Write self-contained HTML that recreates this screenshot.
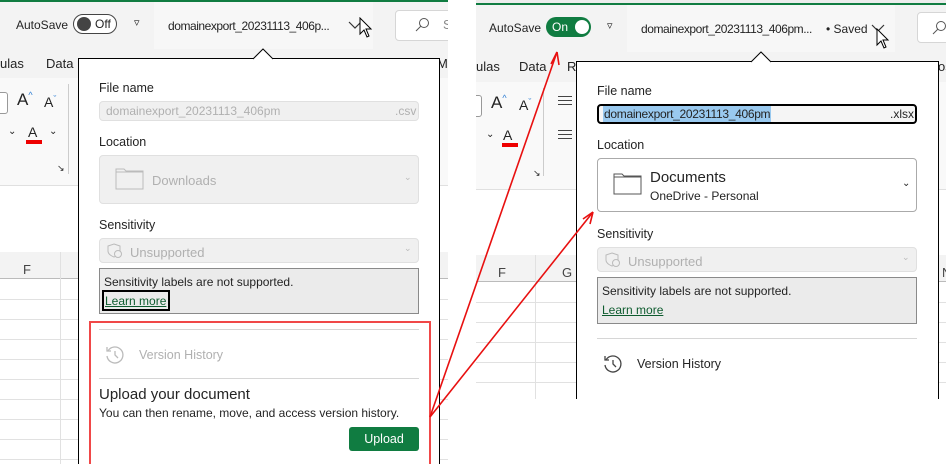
<!DOCTYPE html>
<html><head><meta charset="utf-8"><style>
*{margin:0;padding:0;box-sizing:border-box}
body{width:946px;height:464px;overflow:hidden;background:#fff;font-family:"Liberation Sans",sans-serif;font-size:12px;color:#242424;position:relative}
.a{position:absolute;white-space:nowrap}
.img{position:absolute;overflow:hidden}
.lbl{font-size:12.5px;color:#242424}
.dd{position:absolute;background:#f0f0f0;border:1px solid #e0e0e0;border-radius:4px}
.gl{position:absolute;background:#e1e1e1}
.tt{font-size:12px;letter-spacing:-0.45px}
</style></head><body>

<!-- LEFT IMAGE -->
<div class="img" style="left:0;top:0;width:448px;height:464px;background:#fff">
  <div class="a" style="left:0;top:0;width:448px;height:2px;background:#107c41"></div>
  <div class="a" style="left:0;top:2px;width:448px;height:76px;background:#f3f3f3"></div>
  <div class="a" style="left:154px;top:2px;width:219px;height:47px;background:#f7f7f7"></div>
  <div class="a" style="left:16px;top:18px;font-size:12px">AutoSave</div>
  <div class="a" style="left:73px;top:14px;width:44px;height:20px;border:1px solid #444;border-radius:10px;background:#fff"></div>
  <div class="a" style="left:77px;top:17px;width:14px;height:14px;border-radius:7px;background:#444"></div>
  <div class="a" style="left:95px;top:17px;font-size:12px">Off</div>
  <div class="a" style="left:134px;top:16px;font-size:11px">▿</div>
  <div class="a tt" style="left:168px;top:19px">domainexport_20231113_406p...</div>
  <svg class="a" style="left:348px;top:20px" width="14" height="10"><path d="M1 2 L7 8 L13 2" stroke="#333" fill="none" stroke-width="1.2"/></svg>
  <svg class="a" style="left:359px;top:17px" width="14" height="22"><path d="M1 1 L1 17 L5 13 L8 20 L10 19 L7 12 L12 12 Z" fill="#fff" stroke="#000"/></svg>
  <div class="a" style="left:395px;top:10px;width:60px;height:31px;background:#fff;border:1px solid #d6d6d6;border-radius:4px"></div>
  <svg class="a" style="left:414px;top:17px" width="16" height="16"><circle cx="10" cy="6" r="4.5" stroke="#555" fill="none"/><path d="M7 9 L2 14" stroke="#555"/></svg>
  <div class="a" style="left:443px;top:17px;font-size:13px;color:#888">S</div>
  <div class="a" style="left:0;top:56px;font-size:13px">ulas</div>
  <div class="a" style="left:46px;top:56px;font-size:13px">Data</div>
  <div class="a" style="left:437px;top:56px;font-size:13px">Ma</div>
  <div class="a" style="left:0;top:78px;width:448px;height:108px;background:#f9f9f9;border-bottom:1px solid #e0e0e0"></div>
  <div class="a" style="left:-4px;top:92px;width:12px;height:22px;border:1px solid #999;border-radius:3px;background:#fff"></div>
  <div class="a" style="left:17px;top:90px;font-size:17px">A<span style="font-size:9px;color:#2b7cd3;vertical-align:top">^</span></div>
  <div class="a" style="left:44px;top:94px;font-size:14px">A<span style="font-size:9px;color:#2b7cd3;vertical-align:top">ˇ</span></div>
  <div class="a" style="left:8px;top:126px;font-size:10px">⌄</div>
  <div class="a" style="left:28px;top:124px;font-size:14px">A</div>
  <div class="a" style="left:26px;top:140px;width:16px;height:4px;background:#e00"></div>
  <div class="a" style="left:49px;top:126px;font-size:10px">⌄</div>
  <div class="a" style="left:68px;top:84px;width:1px;height:90px;background:#ccc"></div>
  <div class="a" style="left:57px;top:163px;font-size:9px">↘</div>
  <div class="a" style="left:0;top:252px;width:448px;height:27px;background:#f3f3f3;border-bottom:1px solid #bbb"></div>
  <div class="a" style="left:23px;top:262px;font-size:13px;color:#444">F</div>
  <div class="gl" style="left:60px;top:252px;width:1px;height:212px"></div>
  <div class="gl" style="left:0;top:299px;width:448px;height:1px"></div>
  <div class="gl" style="left:0;top:319px;width:448px;height:1px"></div>
  <div class="gl" style="left:0;top:339px;width:448px;height:1px"></div>
  <div class="gl" style="left:0;top:359px;width:448px;height:1px"></div>
  <div class="gl" style="left:0;top:379px;width:448px;height:1px"></div>
  <div class="gl" style="left:0;top:399px;width:448px;height:1px"></div>
  <div class="gl" style="left:0;top:419px;width:448px;height:1px"></div>
  <div class="gl" style="left:0;top:439px;width:448px;height:1px"></div>
  <div class="gl" style="left:0;top:459px;width:448px;height:1px"></div>
  <!-- flyout -->
  <div class="a" style="left:78px;top:58px;width:362px;height:420px;background:#fff;border:1px solid #000"></div>
  <svg class="a" style="left:253px;top:48px" width="22" height="12"><path d="M0 11 L10 1 L20 11" fill="#fff" stroke="#000"/></svg>
  <div class="a lbl" style="left:99px;top:81px">File name</div>
  <div class="dd" style="left:99px;top:101px;width:320px;height:20px"></div>
  <div class="a" style="left:106px;top:104px;color:#b0b0b0">domainexport_20231113_406pm</div>
  <div class="a" style="left:395px;top:104px;color:#b0b0b0">.csv</div>
  <div class="a lbl" style="left:99px;top:135px">Location</div>
  <div class="dd" style="left:99px;top:155px;width:320px;height:49px"></div>
  <svg class="a" style="left:115px;top:168px" width="29" height="22"><path d="M1 1 H9 L11 3 H28 V21 H1 Z M1 4 H28" fill="none" stroke="#bbb"/></svg>
  <div class="a" style="left:152px;top:173px;color:#b0b0b0;font-size:13px">Downloads</div>
  <div class="a" style="left:404px;top:172px;color:#bbb;font-size:9px">⌄</div>
  <div class="a lbl" style="left:99px;top:218px">Sensitivity</div>
  <div class="dd" style="left:99px;top:238px;width:320px;height:25px"></div>
  <svg class="a" style="left:106px;top:243px" width="18" height="16"><path d="M8 1 L14 3 V8 C14 12 8 14 8 14 C8 14 2 12 2 8 V3 Z" fill="none" stroke="#bbb"/><circle cx="12" cy="11" r="3.5" fill="#f0f0f0" stroke="#bbb"/></svg>
  <div class="a" style="left:130px;top:245px;color:#b0b0b0;font-size:13px">Unsupported</div>
  <div class="a" style="left:404px;top:243px;color:#bbb;font-size:9px">⌄</div>
  <div class="a" style="left:99px;top:268px;width:320px;height:46px;background:#ebebeb;border:1px solid #8a8a8a"></div>
  <div class="a" style="left:104px;top:275px">Sensitivity labels are not supported.</div>
  <div class="a" style="left:102px;top:290px;width:68px;height:21px;border:2px solid #000"></div>
  <div class="a" style="left:105px;top:294px;color:#0e5c2f;text-decoration:underline">Learn more</div>
  <div class="a" style="left:99px;top:329px;width:320px;height:1px;background:#d6d6d6"></div>
  <svg class="a" style="left:105px;top:345px" width="20" height="20"><path d="M3 6 A8 8 0 1 1 2 11" fill="none" stroke="#bbb" stroke-width="1.3"/><path d="M2 2 V6 H6" fill="none" stroke="#bbb" stroke-width="1.3"/><path d="M10 6 V10 L13 13" fill="none" stroke="#bbb" stroke-width="1.3"/></svg>
  <div class="a" style="left:139px;top:348px;color:#b0b0b0;font-size:12.5px">Version History</div>
  <div class="a" style="left:99px;top:378px;width:320px;height:1px;background:#d6d6d6"></div>
  <div class="a" style="left:99px;top:386px;font-size:15px">Upload your document</div>
  <div class="a" style="left:99px;top:406px">You can then rename, move, and access version history.</div>
  <div class="a" style="left:349px;top:427px;width:70px;height:24px;background:#107c41;border-radius:3px;color:#fff;text-align:center;line-height:24px;font-size:12.5px">Upload</div>
  <div class="a" style="left:89px;top:321px;width:342px;height:145px;border:2px solid #f04848"></div>
</div>

<!-- RIGHT IMAGE -->
<div class="img" style="left:476px;top:0;width:470px;height:400px;background:#fff">
  <div class="a" style="left:0;top:0;width:470px;height:4px;background:#ececec"></div>
  <div class="a" style="left:0;top:3px;width:470px;height:2px;background:#107c41"></div>
  <div class="a" style="left:0;top:5px;width:470px;height:77px;background:#f3f3f3"></div>
  <div class="a" style="left:151px;top:5px;width:268px;height:47px;background:#f7f7f7"></div>
  <div class="a" style="left:13px;top:21px;font-size:12px">AutoSave</div>
  <div class="a" style="left:70px;top:17px;width:45px;height:20px;border-radius:10px;background:#107c41"></div>
  <div class="a" style="left:76px;top:20px;font-size:12px;color:#fff">On</div>
  <div class="a" style="left:99px;top:20px;width:14px;height:14px;border-radius:7px;background:#fff"></div>
  <div class="a" style="left:131px;top:19px;font-size:11px">▿</div>
  <div class="a tt" style="left:165px;top:22px">domainexport_20231113_406pm...</div>
  <div class="a" style="left:350px;top:22px;font-size:12px">• Saved</div>
  <svg class="a" style="left:395px;top:23px" width="14" height="10"><path d="M1 2 L7 8 L13 2" stroke="#333" fill="none" stroke-width="1.2"/></svg>
  <svg class="a" style="left:400px;top:28px" width="14" height="22"><path d="M1 1 L1 17 L5 13 L8 20 L10 19 L7 12 L12 12 Z" fill="#fff" stroke="#000"/></svg>
  <div class="a" style="left:441px;top:12px;width:40px;height:31px;background:#fff;border:1px solid #d6d6d6;border-radius:4px"></div>
  <svg class="a" style="left:455px;top:20px" width="16" height="16"><circle cx="10" cy="6" r="4.5" stroke="#555" fill="none"/><path d="M7 9 L2 14" stroke="#555"/></svg>
  <div class="a" style="left:0;top:59px;font-size:13px">ulas</div>
  <div class="a" style="left:43px;top:59px;font-size:13px">Data</div>
  <div class="a" style="left:91px;top:59px;font-size:13px">R</div>
  <div class="a" style="left:462px;top:59px;font-size:13px">os</div>
  <div class="a" style="left:0;top:82px;width:470px;height:108px;background:#f9f9f9;border-bottom:1px solid #e0e0e0"></div>
  <div class="a" style="left:-6px;top:95px;width:12px;height:22px;border:1px solid #999;border-radius:3px;background:#fff"></div>
  <div class="a" style="left:15px;top:93px;font-size:17px">A<span style="font-size:9px;color:#2b7cd3;vertical-align:top">^</span></div>
  <div class="a" style="left:43px;top:97px;font-size:14px">A<span style="font-size:9px;color:#2b7cd3;vertical-align:top">ˇ</span></div>
  <div class="a" style="left:10px;top:129px;font-size:10px">⌄</div>
  <div class="a" style="left:27px;top:127px;font-size:14px">A</div>
  <div class="a" style="left:26px;top:143px;width:16px;height:4px;background:#e00"></div>
  <div class="a" style="left:67px;top:88px;width:1px;height:88px;background:#ccc"></div>
  <div class="a" style="left:57px;top:168px;font-size:9px">↘</div>
  <div class="a" style="left:82px;top:96px;width:14px;height:1px;background:#444;box-shadow:0 4px 0 #444,0 8px 0 #444"></div>
  <div class="a" style="left:82px;top:130px;width:14px;height:1px;background:#444;box-shadow:0 4px 0 #444,0 8px 0 #444"></div>
  <div class="a" style="left:0;top:255px;width:470px;height:27px;background:#f3f3f3;border-bottom:1px solid #bbb"></div>
  <div class="a" style="left:22px;top:265px;font-size:13px;color:#444">F</div>
  <div class="a" style="left:86px;top:265px;font-size:13px;color:#444">G</div>
  <div class="gl" style="left:59px;top:255px;width:1px;height:145px"></div>
  <div class="gl" style="left:0;top:302px;width:470px;height:1px"></div>
  <div class="gl" style="left:0;top:322px;width:470px;height:1px"></div>
  <div class="gl" style="left:0;top:342px;width:470px;height:1px"></div>
  <div class="gl" style="left:0;top:362px;width:470px;height:1px"></div>
  <div class="gl" style="left:0;top:382px;width:470px;height:1px"></div>
  <div class="a" style="left:466px;top:265px;font-size:13px;color:#444">N</div>
  <!-- flyout -->
  <div class="a" style="left:100px;top:61px;width:363px;height:360px;background:#fff;border:1px solid #000"></div>
  <svg class="a" style="left:275px;top:51px" width="22" height="12"><path d="M0 11 L10 1 L20 11" fill="#fff" stroke="#000"/></svg>
  <div class="a lbl" style="left:121px;top:84px">File name</div>
  <div class="a" style="left:121px;top:104px;width:320px;height:20px;background:#f5f5f5;border:2px solid #000;border-radius:4px"></div>
  <div class="a" style="left:127px;top:106px;background:#99c9ef;padding:0 1px;line-height:16px;letter-spacing:-0.3px">domainexport_20231113_406pm</div>
  <div class="a" style="left:414px;top:107px">.xlsx</div>
  <div class="a lbl" style="left:121px;top:138px">Location</div>
  <div class="a" style="left:121px;top:158px;width:320px;height:54px;background:#fff;border:1px solid #aaa;border-radius:4px"></div>
  <svg class="a" style="left:137px;top:173px" width="29" height="22"><path d="M1 1 H9 L11 3 H28 V21 H1 Z M1 4 H28" fill="none" stroke="#555"/></svg>
  <div class="a" style="left:174px;top:169px;font-size:15px">Documents</div>
  <div class="a" style="left:174px;top:189px;font-size:12px">OneDrive - Personal</div>
  <div class="a" style="left:426px;top:178px;font-size:10px">⌄</div>
  <div class="a lbl" style="left:121px;top:227px">Sensitivity</div>
  <div class="dd" style="left:121px;top:247px;width:320px;height:25px"></div>
  <svg class="a" style="left:128px;top:252px" width="18" height="16"><path d="M8 1 L14 3 V8 C14 12 8 14 8 14 C8 14 2 12 2 8 V3 Z" fill="none" stroke="#bbb"/><circle cx="12" cy="11" r="3.5" fill="#f0f0f0" stroke="#bbb"/></svg>
  <div class="a" style="left:152px;top:254px;color:#b0b0b0;font-size:13px">Unsupported</div>
  <div class="a" style="left:426px;top:252px;color:#bbb;font-size:9px">⌄</div>
  <div class="a" style="left:121px;top:277px;width:320px;height:47px;background:#ebebeb;border:1px solid #8a8a8a"></div>
  <div class="a" style="left:126px;top:284px">Sensitivity labels are not supported.</div>
  <div class="a" style="left:126px;top:303px;color:#0e5c2f;text-decoration:underline">Learn more</div>
  <div class="a" style="left:121px;top:338px;width:320px;height:1px;background:#d6d6d6"></div>
  <svg class="a" style="left:127px;top:354px" width="20" height="20"><path d="M3 6 A8 8 0 1 1 2 11" fill="none" stroke="#444" stroke-width="1.3"/><path d="M2 2 V6 H6" fill="none" stroke="#444" stroke-width="1.3"/><path d="M10 6 V10 L13 13" fill="none" stroke="#444" stroke-width="1.3"/></svg>
  <div class="a" style="left:161px;top:357px;font-size:12.5px">Version History</div>
</div>
<div class="a" style="left:476px;top:399px;width:470px;height:65px;background:#fff"></div>

<!-- red arrows -->
<svg class="a" style="left:0;top:0" width="946" height="464">
  <path d="M430 417 L557 52" stroke="#e81010" stroke-width="1.6" fill="none"/>
  <path d="M557 52 L551 64 M557 52 L559 65" stroke="#e81010" stroke-width="1.6"/>
  <path d="M430 417 L593 212" stroke="#e81010" stroke-width="1.6" fill="none"/>
  <path d="M593 212 L583 219 M593 212 L590 224" stroke="#e81010" stroke-width="1.6"/>
</svg>
</body></html>
